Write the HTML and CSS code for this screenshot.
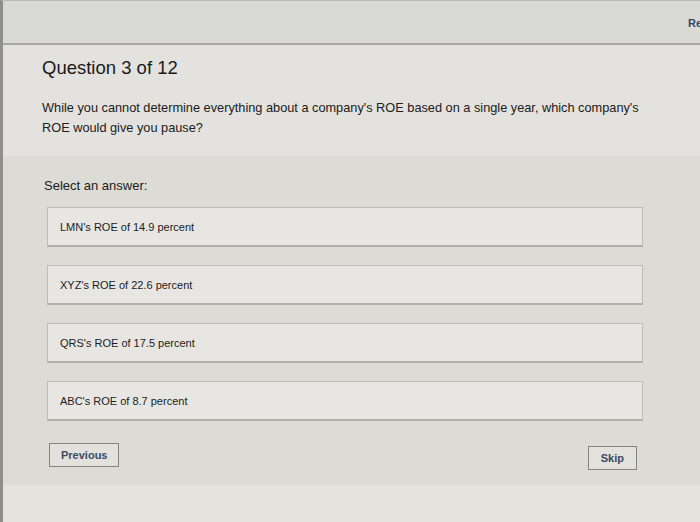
FILE: index.html
```html
<!DOCTYPE html>
<html>
<head>
<meta charset="utf-8">
<link rel="stylesheet" href="styles.css">
</head>
<body>
<div class="page">
  <header class="topbar">
    <a class="review">Review</a>
  </header>
  <section class="question">
    <h1 class="q-title">Question 3 of 12</h1>
    <p class="q-text">While you cannot determine everything about a company's ROE based on a single year, which company's ROE would give you pause?</p>
  </section>
  <section class="answers">
    <p class="prompt">Select an answer:</p>
    <div class="options">
      <div class="option">LMN's ROE of 14.9 percent</div>
      <div class="option">XYZ's ROE of 22.6 percent</div>
      <div class="option">QRS's ROE of 17.5 percent</div>
      <div class="option">ABC's ROE of 8.7 percent</div>
    </div>
    <div class="nav">
      <button class="btn">Previous</button>
      <button class="btn btn-skip">Skip</button>
    </div>
  </section>
  <footer class="bottom"></footer>
</div>
</body>
</html>
```
FILE: styles.css
```css
html, body {
  margin: 0;
  padding: 0;
  height: 100%;
  overflow: hidden;
}
body {
  background: #e2e1dc;
  font-family: "Liberation Sans", Arial, sans-serif;
  color: #1f1f1f;
}
.page {
  border-left: 3px solid #8e8e8b;
  border-top: 1px solid #b9b9b5;
  height: 100%;
  box-sizing: border-box;
  display: flex;
  flex-direction: column;
}
.topbar {
  height: 42px;
  background: #d9d9d5;
  border-bottom: 2px solid #a8a8a4;
  display: flex;
  align-items: center;
  justify-content: flex-end;
  overflow: hidden;
}
.review {
  font-size: 11px;
  font-weight: bold;
  color: #33476a;
  margin-right: -26px;
  padding-top: 2px;
}
.question {
  background: #e3e2de;
  padding: 11px 40px 19px 39px;
  height: 81px;
}
.q-title {
  margin: 0;
  font-size: 18.5px;
  font-weight: normal;
  color: #1a1a1a;
  line-height: 24px;
}
.q-text {
  margin: 18px 0 0;
  font-size: 12.75px;
  line-height: 20px;
  color: #202020;
  width: 610px;
}
.answers {
  background: #dcdbd6;
  padding: 20px 0 20px 41px;
  height: 289px;
}
.prompt {
  margin: 0 0 11px;
  font-size: 13px;
  line-height: 20px;
  color: #202020;
}
.options {
  display: flex;
  flex-direction: column;
  gap: 18px;
  margin-left: 3px;
  width: 596px;
}
.option {
  height: 40px;
  box-sizing: border-box;
  background: #e7e6e2;
  border: 1px solid #bdbcb7;
  border-bottom: 2px solid #b0afaa;
  padding: 0 12px;
  display: flex;
  align-items: center;
  font-size: 11px;
  color: #1c1c1c;
}
.nav {
  display: flex;
  justify-content: space-between;
  align-items: flex-start;
  margin-top: 22px;
  margin-left: 5px;
  width: 588px;
}
.btn {
  font-family: "Liberation Sans", Arial, sans-serif;
  font-size: 11px;
  font-weight: bold;
  color: #3c4a62;
  background: #e2e1dc;
  border: 1px solid #858582;
  height: 24px;
  padding: 0 11px;
  border-radius: 0;
}
.btn-skip {
  margin-top: 3px;
  padding: 0 12px;
}
.bottom {
  flex: 1;
  background: #e4e3de;
}
```
